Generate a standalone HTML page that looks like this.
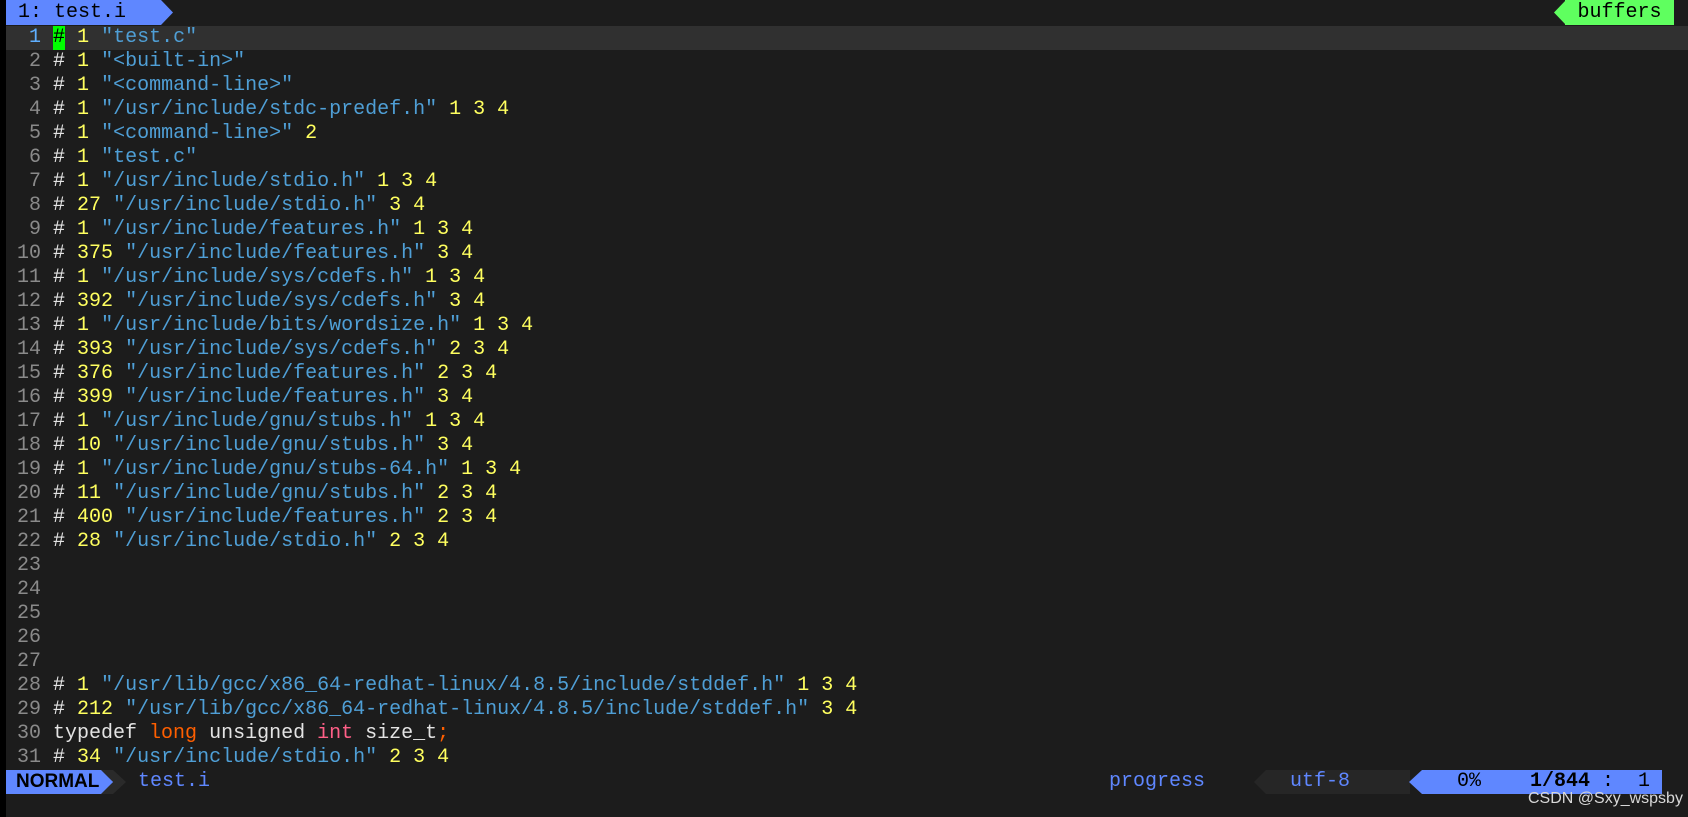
<!DOCTYPE html>
<html><head><meta charset="utf-8"><style>
*{margin:0;padding:0}
html,body{width:1688px;height:817px;overflow:hidden;background:#1c1c1c}
body{position:relative;font-family:"Liberation Mono","Noto Sans CJK SC",monospace;font-size:20px;}
.l{position:absolute;left:17px;height:24px;line-height:24px;white-space:pre;color:#e4e4e4;width:1671px}
.n{color:#8a8a8a}.y{color:#ffff5f}.s{color:#4f9fd6}.o{color:#ff5f00}.p{color:#ff5f87}
.abs{position:absolute}
</style></head><body>
<div class="abs" style="left:0;top:0;width:6px;height:817px;background:#000"></div>
<!-- top tabline -->
<div class="abs" style="left:6px;top:0;width:1682px;height:25px;background:#1c1c1c"></div>
<div class="abs" style="left:6px;top:0;width:147px;height:25px;background:#5f87ff"></div>
<svg class="abs" style="left:153px;top:0" width="20" height="25"><polygon points="0,0 8,0 20,12.5 8,25 0,25" fill="#5f87ff"/></svg>
<div class="abs" style="left:18px;top:0;height:25px;line-height:25px;color:#000;white-space:pre">1: test.i</div>
<svg class="abs" style="left:1554px;top:0" width="12" height="25"><polygon points="12,0 0,12.5 12,25" fill="#5fff5f"/></svg>
<div class="abs" style="left:1565px;top:0;width:109px;height:25px;background:#5fff5f;color:#000;line-height:25px;text-align:center">buffers</div>
<!-- cursorline -->
<div class="abs" style="left:6px;top:26px;width:1682px;height:24px;background:#303030"></div>
<div class="abs" style="left:53px;top:26px;width:12px;height:24px;background:#00ff00"></div>

<div class="l" style="top:26px"><span class="n" style="color:#5fafff"> 1</span> <span style="color:#000">#</span> <span class="y">1</span> <span class="s">"test.c"</span></div>
<div class="l" style="top:50px"><span class="n"> 2</span> # <span class="y">1</span> <span class="s">"&lt;built-in&gt;"</span></div>
<div class="l" style="top:74px"><span class="n"> 3</span> # <span class="y">1</span> <span class="s">"&lt;command-line&gt;"</span></div>
<div class="l" style="top:98px"><span class="n"> 4</span> # <span class="y">1</span> <span class="s">"/usr/include/stdc-predef.h"</span> <span class="y">1 3 4</span></div>
<div class="l" style="top:122px"><span class="n"> 5</span> # <span class="y">1</span> <span class="s">"&lt;command-line&gt;"</span> <span class="y">2</span></div>
<div class="l" style="top:146px"><span class="n"> 6</span> # <span class="y">1</span> <span class="s">"test.c"</span></div>
<div class="l" style="top:170px"><span class="n"> 7</span> # <span class="y">1</span> <span class="s">"/usr/include/stdio.h"</span> <span class="y">1 3 4</span></div>
<div class="l" style="top:194px"><span class="n"> 8</span> # <span class="y">27</span> <span class="s">"/usr/include/stdio.h"</span> <span class="y">3 4</span></div>
<div class="l" style="top:218px"><span class="n"> 9</span> # <span class="y">1</span> <span class="s">"/usr/include/features.h"</span> <span class="y">1 3 4</span></div>
<div class="l" style="top:242px"><span class="n">10</span> # <span class="y">375</span> <span class="s">"/usr/include/features.h"</span> <span class="y">3 4</span></div>
<div class="l" style="top:266px"><span class="n">11</span> # <span class="y">1</span> <span class="s">"/usr/include/sys/cdefs.h"</span> <span class="y">1 3 4</span></div>
<div class="l" style="top:290px"><span class="n">12</span> # <span class="y">392</span> <span class="s">"/usr/include/sys/cdefs.h"</span> <span class="y">3 4</span></div>
<div class="l" style="top:314px"><span class="n">13</span> # <span class="y">1</span> <span class="s">"/usr/include/bits/wordsize.h"</span> <span class="y">1 3 4</span></div>
<div class="l" style="top:338px"><span class="n">14</span> # <span class="y">393</span> <span class="s">"/usr/include/sys/cdefs.h"</span> <span class="y">2 3 4</span></div>
<div class="l" style="top:362px"><span class="n">15</span> # <span class="y">376</span> <span class="s">"/usr/include/features.h"</span> <span class="y">2 3 4</span></div>
<div class="l" style="top:386px"><span class="n">16</span> # <span class="y">399</span> <span class="s">"/usr/include/features.h"</span> <span class="y">3 4</span></div>
<div class="l" style="top:410px"><span class="n">17</span> # <span class="y">1</span> <span class="s">"/usr/include/gnu/stubs.h"</span> <span class="y">1 3 4</span></div>
<div class="l" style="top:434px"><span class="n">18</span> # <span class="y">10</span> <span class="s">"/usr/include/gnu/stubs.h"</span> <span class="y">3 4</span></div>
<div class="l" style="top:458px"><span class="n">19</span> # <span class="y">1</span> <span class="s">"/usr/include/gnu/stubs-64.h"</span> <span class="y">1 3 4</span></div>
<div class="l" style="top:482px"><span class="n">20</span> # <span class="y">11</span> <span class="s">"/usr/include/gnu/stubs.h"</span> <span class="y">2 3 4</span></div>
<div class="l" style="top:506px"><span class="n">21</span> # <span class="y">400</span> <span class="s">"/usr/include/features.h"</span> <span class="y">2 3 4</span></div>
<div class="l" style="top:530px"><span class="n">22</span> # <span class="y">28</span> <span class="s">"/usr/include/stdio.h"</span> <span class="y">2 3 4</span></div>
<div class="l" style="top:554px"><span class="n">23</span></div>
<div class="l" style="top:578px"><span class="n">24</span></div>
<div class="l" style="top:602px"><span class="n">25</span></div>
<div class="l" style="top:626px"><span class="n">26</span></div>
<div class="l" style="top:650px"><span class="n">27</span></div>
<div class="l" style="top:674px"><span class="n">28</span> # <span class="y">1</span> <span class="s">"/usr/lib/gcc/x86_64-redhat-linux/4.8.5/include/stddef.h"</span> <span class="y">1 3 4</span></div>
<div class="l" style="top:698px"><span class="n">29</span> # <span class="y">212</span> <span class="s">"/usr/lib/gcc/x86_64-redhat-linux/4.8.5/include/stddef.h"</span> <span class="y">3 4</span></div>
<div class="l" style="top:722px"><span class="n">30</span> typedef <span class="o">long</span> unsigned <span class="p">int</span> size_t<span class="o">;</span></div>
<div class="l" style="top:746px"><span class="n">31</span> # <span class="y">34</span> <span class="s">"/usr/include/stdio.h"</span> <span class="y">2 3 4</span></div>

<!-- statusline -->
<div class="abs" style="left:6px;top:770px;width:94px;height:24px;background:#5f87ff;color:#000;font-weight:bold;line-height:24px;padding-left:10px;box-sizing:border-box;font-family:'Liberation Sans Narrow','Liberation Sans',sans-serif;font-size:19px">NORMAL</div>
<svg class="abs" style="left:100px;top:770px" width="26" height="24"><polygon points="0,0 13,0 26,12 13,24 0,24" fill="#2a2a2a"/><polygon points="0,0 1,0 13,12 1,24 0,24" fill="#5f87ff"/><polygon points="0,0 13,12 0,24" fill="#5f87ff"/></svg>
<div class="abs" style="left:138px;top:770px;line-height:24px;color:#5f87ff;white-space:pre">test.i</div>
<div class="abs" style="left:1109px;top:770px;line-height:24px;color:#5f87ff">progress</div>
<svg class="abs" style="left:1254px;top:770px" width="12" height="24"><polygon points="12,0 0,12 12,24" fill="#262626"/></svg>
<div class="abs" style="left:1266px;top:770px;width:144px;height:24px;background:#262626"></div>
<div class="abs" style="left:1290px;top:770px;line-height:24px;color:#5f87ff">utf-8</div>
<svg class="abs" style="left:1409px;top:770px" width="13" height="24"><polygon points="13,0 0,12 13,24" fill="#5f87ff"/></svg>
<div class="abs" style="left:1422px;top:770px;width:240px;height:24px;background:#5f87ff"></div>
<div class="abs" style="left:1457px;top:770px;line-height:24px;color:#000;white-space:pre">0%</div>
<div class="abs" style="left:1530px;top:770px;line-height:24px;color:#000;font-weight:bold;white-space:pre">1/844</div>
<div class="abs" style="left:1602px;top:770px;line-height:24px;color:#000;white-space:pre">:</div>
<div class="abs" style="left:1638px;top:770px;line-height:24px;color:#000;white-space:pre">1</div>
<div class="abs" style="left:1528px;top:789px;line-height:20px;color:#d8d8d8;font-family:'Liberation Sans',sans-serif;font-size:16px;white-space:pre">CSDN @Sxy_wspsby</div>
</body></html>
